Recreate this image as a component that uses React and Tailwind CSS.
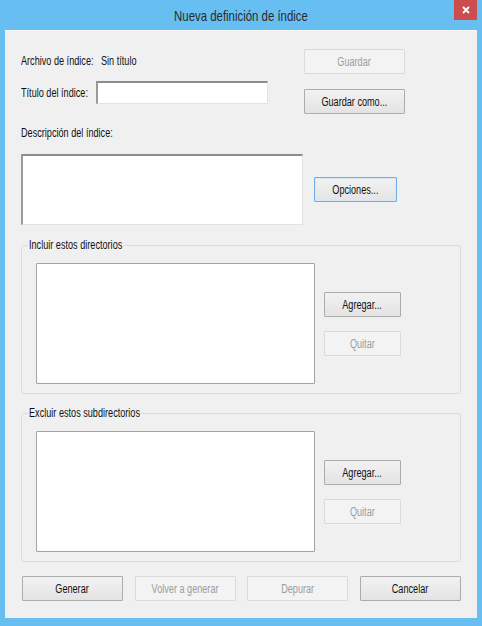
import React from "react";

const FONT = "font-['Liberation_Sans',Arial,sans-serif]";

function T({ children, center }) {
  return (
    <span
      className={
        "inline-block whitespace-nowrap scale-x-[0.76] " + (center ? "origin-center" : "origin-left")
      }
    >
      {children}
    </span>
  );
}

function Btn({ children, disabled, focused, className = "" }) {
  const base =
    "flex items-center justify-center h-[25px] text-[12px] leading-none rounded-[1px] border overflow-visible ";
  const style = disabled
    ? "border-[#dadada] bg-[#f3f3f3] text-[#9c9c9c]"
    : focused
    ? "border-[#6aaeea] bg-gradient-to-b from-[#f2f2f2] to-[#e4e4e4] text-[#111] shadow-[inset_0_0_0_1px_#d6e8f8]"
    : "border-[#acacac] bg-gradient-to-b from-[#f2f2f2] to-[#e3e3e3] text-[#111]";
  return (
    <div className={base + style + " " + className}>
      <T center>{children}</T>
    </div>
  );
}

function Group({ title, legendW }) {
  return (
    <fieldset className="w-[440px] border border-[#dcdcdc] rounded-[3px] p-0 m-0">
      <legend className={"ml-[6px] px-[1px] text-[12px] leading-[14px] text-[#111] " + legendW}>
        <T>{title}</T>
      </legend>
      <div className="flex items-start pl-[14px] pt-[11px] pb-[9px]">
        <div className="w-[279px] h-[121px] bg-white border border-[#a3a3a3] rounded-[1px]" />
        <div className="ml-[9px] pt-[29px] flex flex-col gap-[14px]">
          <Btn className="w-[77px]">Agregar...</Btn>
          <Btn className="w-[77px]" disabled>Quitar</Btn>
        </div>
      </div>
    </fieldset>
  );
}

export default function App() {
  return (
    <div className={"w-[482px] h-[626px] bg-[#67bef0] flex flex-col " + FONT}>
      <div className="relative h-[30px] flex items-center justify-center">
        <span className="text-[15px] text-[#2b2b2b] leading-none mt-[1px]">
          <T center>Nueva definición de índice</T>
        </span>
        <div className="absolute right-[5px] top-0 w-[23px] h-[20px] bg-[#cc4d4d] flex items-center justify-center">
          <svg width="8" height="8" viewBox="0 0 8 8">
            <path d="M1 1 L7 7 M7 1 L1 7" stroke="#fff" strokeWidth="1.8" />
          </svg>
        </div>
      </div>
      <div className="mx-[5px] h-[588px] bg-[#f0f0f0] border-t border-[#f7f7f7] pl-[16px] pt-[18px] flex flex-col">
        <div className="flex items-start">
          <div className="w-[283px] flex flex-col">
            <div className="h-[24px] flex items-center text-[12px] text-[#111]">
              <span className="w-[80px]">
                <T>Archivo de índice:</T>
              </span>
              <span>
                <T>Sin título</T>
              </span>
            </div>
            <div className="mt-[8px] h-[23px] flex items-center text-[12px] text-[#111]">
              <span className="w-[75px]">
                <T>Título del índice:</T>
              </span>
              <div className="w-[172px] h-[23px] bg-white border-t-2 border-l-2 border-r border-b border-t-[#8c8c8c] border-l-[#9a9a9a] border-r-[#e2e2e2] border-b-[#e2e2e2]" />
            </div>
          </div>
          <div className="flex flex-col gap-[15px]">
            <Btn className="w-[101px] h-[24px]" disabled>Guardar</Btn>
            <Btn className="w-[101px] h-[24px]">Guardar como...</Btn>
          </div>
        </div>
        <div className="mt-[12px] text-[12px] leading-[14px] text-[#111]">
          <T>Descripción del índice:</T>
        </div>
        <div className="mt-[14px] flex items-center">
          <div className="w-[282px] h-[71px] bg-white border-t-2 border-l-2 border-r border-b border-t-[#8c8c8c] border-l-[#9a9a9a] border-r-[#e2e2e2] border-b-[#e2e2e2]" />
          <Btn className="ml-[11px] w-[83px]" focused>Opciones...</Btn>
        </div>
        <div className="mt-[13px]">
          <Group title="Incluir estos directorios" legendW="w-[96px]" />
        </div>
        <div className="mt-[12px]">
          <Group title="Excluir estos subdirectorios" legendW="w-[108px]" />
        </div>
        <div className="mt-[14px] ml-[1px] w-[439px] flex justify-between">
          <Btn className="w-[101px]">Generar</Btn>
          <Btn className="w-[101px]" disabled>Volver a generar</Btn>
          <Btn className="w-[101px]" disabled>Depurar</Btn>
          <Btn className="w-[101px]">Cancelar</Btn>
        </div>
      </div>
    </div>
  );
}
